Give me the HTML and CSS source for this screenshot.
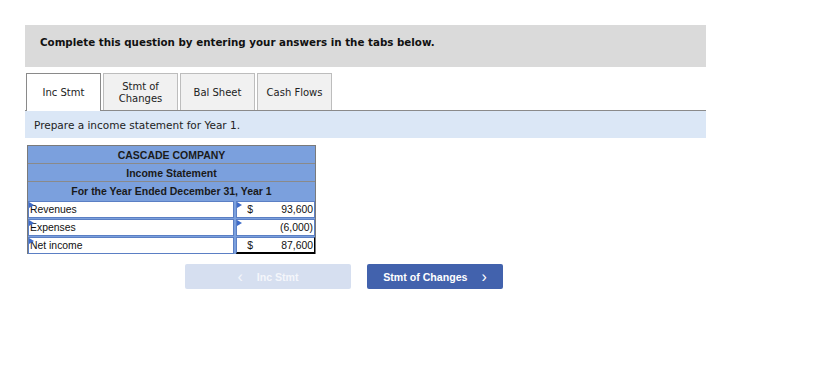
FILE: index.html
```html
<!DOCTYPE html>
<html>
<head>
<meta charset="utf-8">
<link rel="stylesheet" href="styles.css">
</head>
<body>
<div class="page">
  <div class="banner">Complete this question by entering your answers in the tabs below.</div>
  <div class="tabs">
    <div class="tab active">Inc Stmt</div>
    <div class="tab">Stmt of<br>Changes</div>
    <div class="tab">Bal Sheet</div>
    <div class="tab">Cash Flows</div>
  </div>
  <div class="prompt">Prepare a income statement for Year 1.</div>
  <div class="sheet">
    <div class="hrow">CASCADE COMPANY</div>
    <div class="hrow">Income Statement</div>
    <div class="hrow last">For the Year Ended December 31, Year 1</div>
    <div class="drow">
      <div class="cell label flag">Revenues</div>
      <div class="cell amt flag"><span>$</span><span>93,600</span></div>
    </div>
    <div class="drow">
      <div class="cell label flag">Expenses</div>
      <div class="cell amt flag"><span></span><span>(6,000)</span></div>
    </div>
    <div class="drow">
      <div class="cell label flag">Net income</div>
      <div class="cell amt total"><span>$</span><span>87,600</span></div>
    </div>
  </div>
  <div class="nav">
    <div class="btn prev"><span class="chev">&lsaquo;</span>Inc Stmt</div>
    <div class="btn next">Stmt of Changes<span class="chev">&rsaquo;</span></div>
  </div>
</div>
</body>
</html>
```
FILE: styles.css
```css
html, body {
  margin: 0;
  padding: 0;
  background: #fff;
}
.page {
  padding: 25px 0 0 25px;
  font-family: "DejaVu Sans", Verdana, sans-serif;
  color: #111;
}
.banner {
  width: 681px;
  height: 42px;
  box-sizing: border-box;
  background: #dadada;
  padding: 11px 0 0 15px;
  font-size: 10.3px;
  font-weight: bold;
}
.tabs {
  display: flex;
  gap: 2px;
  margin-top: 6px;
  width: 681px;
  border-bottom: 1px solid #8a8a8a;
  padding-left: 1px;
  box-sizing: border-box;
  height: 38px;
}
.tab {
  width: 75px;
  height: 37px;
  box-sizing: border-box;
  background: #f1f1f1;
  border: 1px solid #bdbdbd;
  border-bottom: none;
  padding-top: 1px;
  display: flex;
  align-items: center;
  justify-content: center;
  text-align: center;
  font-size: 10px;
  line-height: 12px;
  color: #222;
}
.tab.active {
  background: #fff;
  border-color: #8a8a8a;
  height: 38px;
  margin-bottom: -1px;
}
.prompt {
  width: 681px;
  height: 27px;
  box-sizing: border-box;
  background: #dbe7f6;
  padding: 8px 0 0 9px;
  font-size: 10.5px;
  color: #222;
}
.sheet {
  margin: 7px 0 0 2px;
  width: 289px;
  box-sizing: border-box;
  background: #7ba0dd;
  border: 1px solid #7a7a7a;
  border-bottom: none;
  font-family: "Liberation Sans", Arial, sans-serif;
}
.hrow {
  height: 18px;
  border-bottom: 1px solid #8a8a8a;
  box-sizing: border-box;
  display: flex;
  align-items: center;
  justify-content: center;
  font-weight: bold;
  font-size: 10.5px;
  color: #1a1a1a;
}
.hrow.last {
  border-bottom: none;
  height: 18px;
}
.drow {
  display: flex;
  gap: 2px;
  height: 18px;
  padding: 1px 0 0 0;
  box-sizing: border-box;
  background: #7ba0dd;
}
.cell {
  position: relative;
  background: #fff;
  border: 1px solid #5b7fc4;
  box-sizing: border-box;
  height: 17px;
  font-size: 10.4px;
  display: flex;
  align-items: center;
  color: #111;
}
.label {
  width: 207px;
  padding-left: 1px;
}
.amt {
  width: 79px;
  justify-content: space-between;
  padding: 0 1px 0 10px;
}
.amt.total {
  border-bottom: 2px solid #000;
  border-right-color: #000;
}
.flag::before {
  content: "";
  position: absolute;
  left: 0;
  top: 0;
  border-top: 3px solid transparent;
  border-bottom: 3px solid transparent;
  border-left: 5px solid #3e6bc8;
}
.nav {
  display: flex;
  gap: 16px;
  margin: 10px 0 0 160px;
}
.btn {
  height: 25px;
  border-radius: 2px;
  display: flex;
  align-items: center;
  justify-content: center;
  font-family: "Liberation Sans", Arial, sans-serif;
  font-weight: bold;
  font-size: 10.6px;
  color: #fff;
}
.btn.prev {
  width: 166px;
  background: #d6dff0;
  color: #f4f6fb;
}
.btn.prev .chev {
  margin-right: 14px;
  font-weight: normal;
  font-size: 16px;
  line-height: 1;
}
.btn.next {
  width: 136px;
  background: #4262ad;
}
.btn.next .chev {
  margin-left: 14px;
  font-weight: normal;
  font-size: 16px;
  line-height: 1;
}
```
